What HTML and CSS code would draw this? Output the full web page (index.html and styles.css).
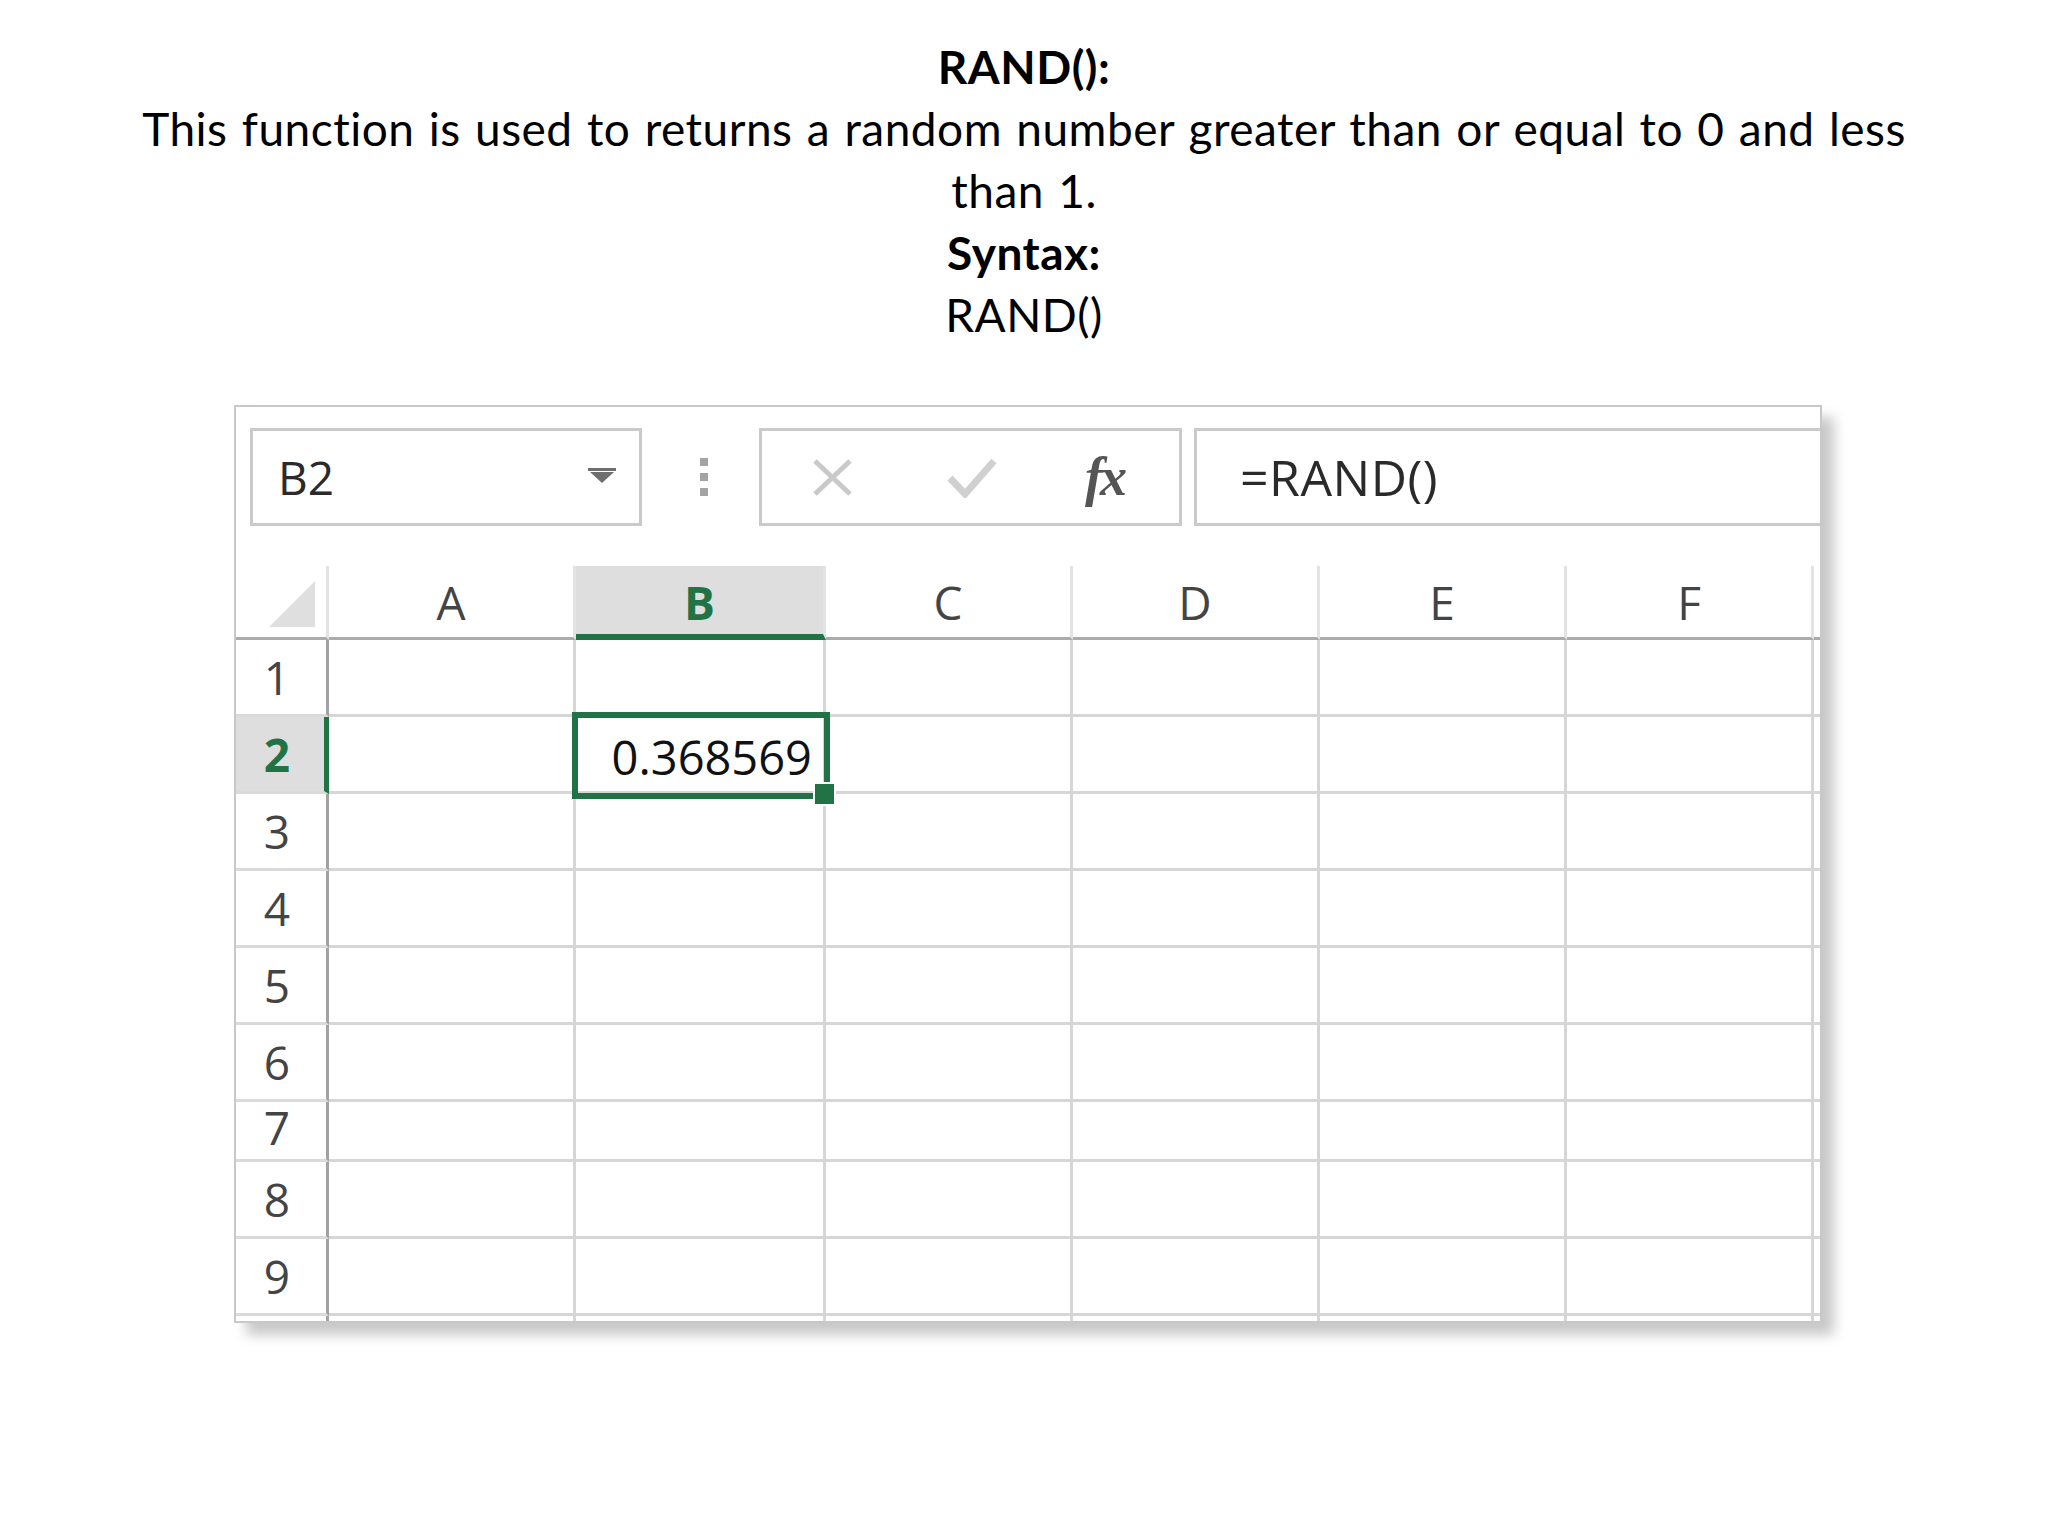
FILE: index.html
```html
<!DOCTYPE html>
<html lang="en">
<head>
<meta charset="utf-8">
<title>RAND()</title>
<link rel="stylesheet" href="styles.css">
</head>
<body>
<div class="page">
  <div class="intro">
    <p class="bold">RAND():</p>
    <p>This function is used to returns a random number greater than or equal to 0 and less<br>than 1.</p>
    <p class="bold">Syntax:</p>
    <p>RAND()</p>
  </div>

  <div class="sheet">
    <div class="fbar">
      <div class="namebox">
        <span>B2</span>
        <svg class="dropdown" width="28" height="15" viewBox="0 0 28 15"><rect x="0" y="0" width="28" height="3" fill="#6e6e6e"/><polygon points="2,4 26,4 14,15" fill="#6e6e6e"/></svg>
      </div>
      <div class="grip"><i></i><i></i><i></i></div>
      <div class="btns">
        <svg class="ico-x" width="41" height="39" viewBox="0 0 41 39"><path d="M3 3 L38 36 M38 3 L3 36" stroke="#c9c9c9" stroke-width="5" fill="none"/></svg>
        <svg class="ico-check" width="50" height="42" viewBox="0 0 50 42"><path d="M3 22 L18 38 L47 5" stroke="#d0d0d0" stroke-width="7" fill="none"/></svg>
        <span class="fx">fx</span>
      </div>
      <div class="formula">=RAND()</div>
    </div>

    <div class="grid">
      <div class="corner"><svg width="46" height="46" viewBox="0 0 46 46"><polygon points="46,0 46,46 0,46" fill="#dfdfdf"/></svg></div>
      <div class="ch">A</div>
      <div class="ch sel">B</div>
      <div class="ch">C</div>
      <div class="ch">D</div>
      <div class="ch">E</div>
      <div class="ch">F</div>
      <div class="ch end"></div>

      <div class="rh">1</div>
      <div class="c"></div><div class="c"></div><div class="c"></div><div class="c"></div><div class="c"></div><div class="c"></div><div class="c end"></div>

      <div class="rh sel">2</div>
      <div class="c"></div>
      <div class="c active"><span class="val">0.368569</span><span class="handle"></span></div>
      <div class="c"></div><div class="c"></div><div class="c"></div><div class="c"></div><div class="c end"></div>

      <div class="rh">3</div>
      <div class="c"></div><div class="c"></div><div class="c"></div><div class="c"></div><div class="c"></div><div class="c"></div><div class="c end"></div>

      <div class="rh">4</div>
      <div class="c"></div><div class="c"></div><div class="c"></div><div class="c"></div><div class="c"></div><div class="c"></div><div class="c end"></div>

      <div class="rh">5</div>
      <div class="c"></div><div class="c"></div><div class="c"></div><div class="c"></div><div class="c"></div><div class="c"></div><div class="c end"></div>

      <div class="rh">6</div>
      <div class="c"></div><div class="c"></div><div class="c"></div><div class="c"></div><div class="c"></div><div class="c"></div><div class="c end"></div>

      <div class="rh short">7</div>
      <div class="c"></div><div class="c"></div><div class="c"></div><div class="c"></div><div class="c"></div><div class="c"></div><div class="c end"></div>

      <div class="rh">8</div>
      <div class="c"></div><div class="c"></div><div class="c"></div><div class="c"></div><div class="c"></div><div class="c"></div><div class="c end"></div>

      <div class="rh">9</div>
      <div class="c"></div><div class="c"></div><div class="c"></div><div class="c"></div><div class="c"></div><div class="c"></div><div class="c end"></div>

      <div class="rh last"></div>
      <div class="c last"></div><div class="c last"></div><div class="c last"></div><div class="c last"></div><div class="c last"></div><div class="c last"></div><div class="c end last"></div>
    </div>
  </div>
</div>
</body>
</html>
```

FILE: styles.css
```css
html, body {
  margin: 0;
  padding: 0;
  background: #ffffff;
}

.page {
  width: 2048px;
  min-height: 1536px;
}

.intro {
  padding-top: 36px;
  text-align: center;
  font-family: Lato, "Liberation Sans", sans-serif;
  font-size: 46px;
  letter-spacing: 0.5px;
  word-spacing: 2px;
  line-height: 62px;
  color: #000000;
}

.intro p {
  margin: 0;
}

.bold {
  font-weight: 700;
}

.sheet {
  margin: 59px 0 0 234px;
  width: 1588px;
  height: 918px;
  box-sizing: border-box;
  border: 2px solid #c8c8c8;
  background: #ffffff;
  box-shadow: 12px 12px 12px rgba(0, 0, 0, 0.22);
  font-family: "Open Sans", "Liberation Sans", sans-serif;
  overflow: hidden;
}

/* formula bar */
.fbar {
  display: flex;
  height: 98px;
  padding: 21px 0 40px 14px;
}

.namebox {
  width: 392px;
  box-sizing: border-box;
  border: 3px solid #cacaca;
  display: flex;
  align-items: center;
  justify-content: space-between;
  padding: 0 23px 0 25px;
  font-size: 46px;
  color: #2a2a2a;
}

.dropdown {
  margin-top: -4px;
}

.grip {
  width: 117px;
  box-sizing: border-box;
  padding-left: 58px;
  display: flex;
  flex-direction: column;
  justify-content: center;
  gap: 7px;
}

.grip i {
  display: block;
  width: 8px;
  height: 8px;
  background: #a3a3a3;
}

.btns {
  width: 423px;
  box-sizing: border-box;
  border: 3px solid #cacaca;
  display: flex;
  align-items: center;
  padding-left: 50px;
}

.ico-check {
  margin-left: 94px;
}

.fx {
  margin-left: 88px;
  color: #555555;
  font-family: "Liberation Serif", serif;
  font-style: italic;
  font-weight: 700;
  font-size: 54px;
  letter-spacing: -3px;
  line-height: 1;
}

.formula {
  flex: 1;
  margin-left: 12px;
  border: 3px solid #cacaca;
  border-right: none;
  display: flex;
  align-items: center;
  padding-left: 43px;
  font-size: 50px;
  letter-spacing: 0.5px;
  color: #2a2a2a;
}

/* grid */
.grid {
  display: grid;
  grid-template-columns: 93px 247px 250px 247px 247px 247px 247px 1fr;
  grid-template-rows: 74px repeat(6, 77px) 60px 77px 77px 1fr;
  height: 755px;
}

.grid > div {
  box-sizing: border-box;
  min-width: 0;
}

.corner {
  border-right: 3px solid #e3e3e3;
  border-bottom: 3px solid #ababab;
  padding: 15px 0 0 33px;
}

.corner svg {
  display: block;
}

.ch {
  border-right: 3px solid #e3e3e3;
  border-bottom: 3px solid #ababab;
  display: flex;
  align-items: center;
  justify-content: center;
  font-size: 46px;
  color: #444444;
}

.ch.sel {
  background: #dedede;
  color: #217346;
  font-weight: 700;
  border-bottom: 6px solid #217346;
  padding-top: 3px;
}

.ch.end {
  border-right: none;
}

.rh {
  border-right: 3px solid #a2a2a2;
  border-bottom: 3px solid #dadada;
  display: flex;
  align-items: center;
  justify-content: center;
  padding-right: 8px;
  font-size: 46px;
  color: #444444;
}

.rh.short {
  padding-bottom: 8px;
}

.rh.sel {
  background: #dedede;
  color: #217346;
  font-weight: 700;
  border-right: 5px solid #217346;
  padding-right: 6px;
}

.c {
  border-right: 3px solid #d6d6d6;
  border-bottom: 3px solid #d6d6d6;
}

.c.end {
  border-right: none;
}

.last {
  border-bottom: none !important;
}

.c.active {
  position: relative;
  display: flex;
  align-items: center;
  justify-content: flex-end;
  padding: 6px 11px 0 0;
}

.c.active::after {
  content: "";
  position: absolute;
  top: -5px;
  left: -4px;
  right: -7px;
  bottom: -8px;
  border: 6px solid #217346;
}

.val {
  font-size: 47px;
  color: #111111;
  line-height: 1;
}

.handle {
  position: absolute;
  right: -13px;
  bottom: -15px;
  width: 19px;
  height: 20px;
  background: #217346;
  border: 2px solid #ffffff;
  z-index: 2;
}
```
